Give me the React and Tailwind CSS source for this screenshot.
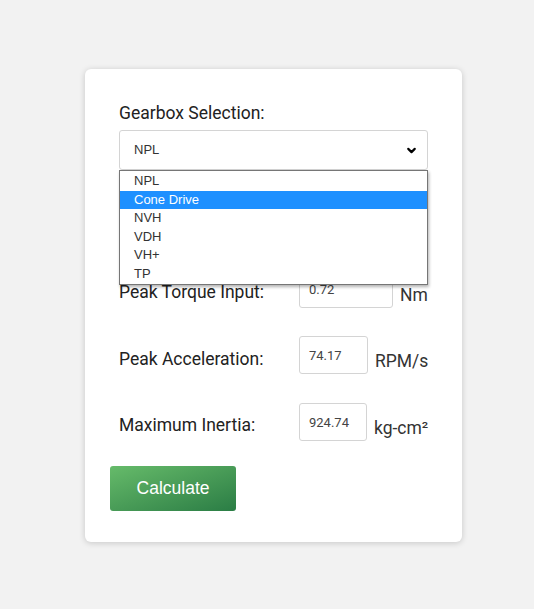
import { ChevronDown } from 'lucide-react';

const options = ['NPL', 'Cone Drive', 'NVH', 'VDH', 'VH+', 'TP'];

const rows = [
  { label: 'Peak Torque Input:', value: '0.72', unit: 'Nm', width: 'w-[94px]' },
  { label: 'Peak Acceleration:', value: '74.17', unit: 'RPM/s', width: 'w-[69px]' },
  { label: 'Maximum Inertia:', value: '924.74', unit: 'kg-cm²', width: 'w-[68px]' },
];

function FieldRow({ label, value, unit, width }) {
  return (
    <div className="flex items-center h-[38px]">
      <div className="w-[180px] mt-[8px] text-[17.5px] text-[#222] font-['Roboto',sans-serif]">{label}</div>
      <div className={`${width} h-[38px] border border-[#d4d4d4] rounded-[3px] px-[9px] pt-[9px] text-[13px] text-[#444] font-['Roboto',sans-serif] bg-white`}>
        {value}
      </div>
      <div className="ml-[7px] mt-[13px] text-[17.5px] text-[#333] font-['Roboto',sans-serif]">{unit}</div>
    </div>
  );
}

export default function App() {
  return (
    <div className="min-h-[609px] bg-[#f2f2f2] pt-[69px]">
      <div className="ml-[85px] w-[377px] h-[473px] bg-white rounded-[6px] shadow-[0_1px_6px_rgba(0,0,0,0.18)] px-[25px] pt-[34px]">
        <div className="ml-[9px] relative">
          <div className="text-[17.5px] leading-[21px] text-[#222] font-['Roboto',sans-serif]">Gearbox Selection:</div>
          <div className="mt-[6px] w-[309px] h-[40px] border border-[#d4d4d4] rounded-[3px] flex items-center justify-between pl-[14px] pr-[9px] bg-white">
            <span className="text-[13px] text-[#333] font-['Liberation_Sans',Arial,sans-serif]">NPL</span>
            <ChevronDown className="w-[13px] h-[13px] text-black" strokeWidth={4} />
          </div>

          {/* open listbox */}
          <div className="absolute left-0 top-[67px] w-[309px] bg-white border border-[#767676] shadow-[1px_2px_3px_rgba(0,0,0,0.3)] z-10 py-px">
            {options.map((o, i) => (
              <div
                key={o}
                className={`h-[18.5px] leading-[18.5px] pl-[14px] text-[13px] font-['Liberation_Sans',Arial,sans-serif] ${i === 1 ? 'bg-[#1e90ff] text-white' : 'text-[#333]'}`}
              >
                {o}
              </div>
            ))}
          </div>

          {/* row hidden behind the open listbox */}
          <div className="h-[38px] mt-[32px]" />

          <div className="mt-[29.5px] flex flex-col gap-[28.5px]">
            {rows.map((r) => (
              <FieldRow key={r.label} {...r} />
            ))}
          </div>
        </div>

        <button className="mt-[25px] w-[126px] h-[45px] rounded-[3px] bg-linear-to-br from-[#66bb6a] to-[#2a7d45] text-white text-[17.5px] font-['Liberation_Sans',Arial,sans-serif]">
          Calculate
        </button>
      </div>
    </div>
  );
}
